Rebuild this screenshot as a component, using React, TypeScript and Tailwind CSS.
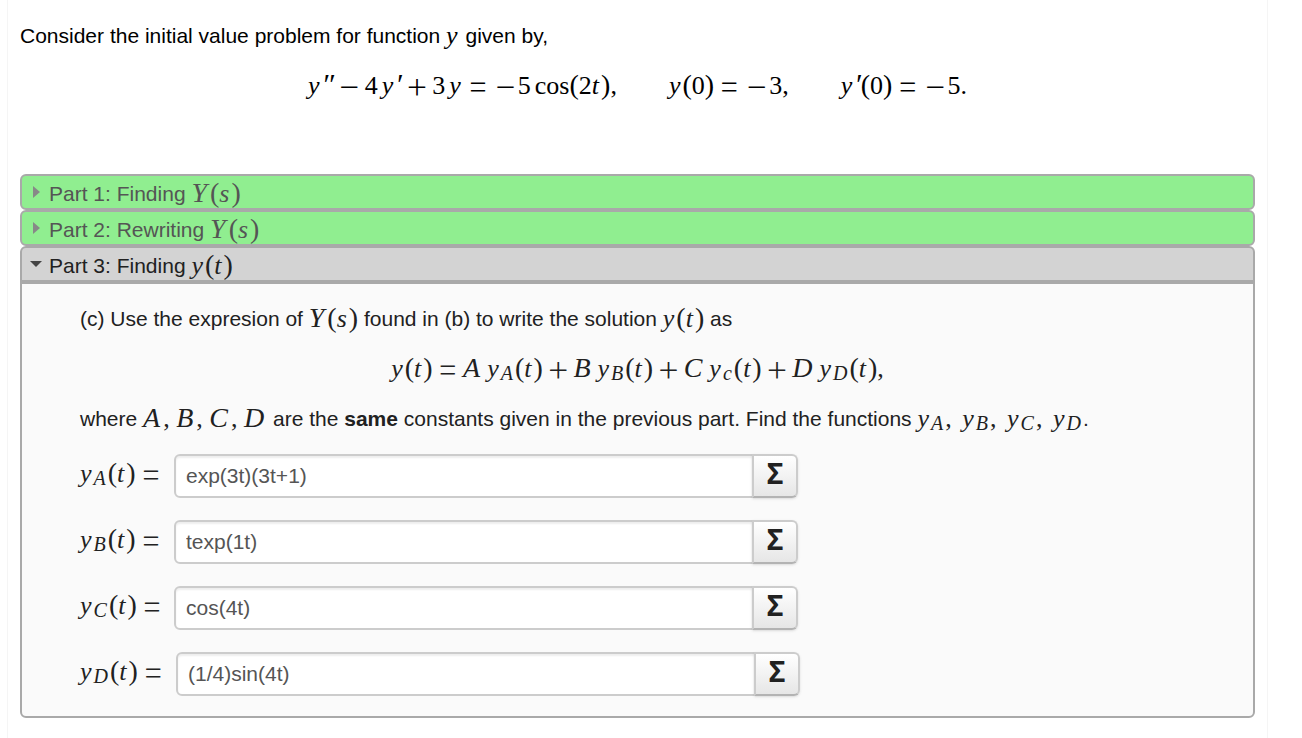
import clsx from 'clsx';
import { ReactNode, useState } from 'react';

type Children = { children: ReactNode };

const MathText = ({ children }: Children) => (
  <span className="align-[-1px] font-['Liberation_Serif',serif] text-[26px] leading-none whitespace-nowrap">
    {children}
  </span>
);

const Var = ({ children }: Children) => <i className="mr-0.5">{children}</i>;

const Cap = ({ children }: Children) => (
  <i className="mr-[3px] text-[28px] leading-[0]">{children}</i>
);

const Sub = ({ children }: Children) => (
  <i className="mr-0.5 align-[-3px] text-[20px] leading-[0]">{children}</i>
);

const Prime = ({ children }: Children) => (
  <i className="text-[30px] leading-[0]">{children}</i>
);

const Paren = ({ children }: Children) => (
  <>
    <span className="text-[28px] leading-[0]">(</span>
    {children}
    <span className="text-[28px] leading-[0]">)</span>
  </>
);

// binary operators and relations
const Op = ({ children }: Children) => (
  <span className="mx-[3px] align-[-4px] font-['Inter',sans-serif] text-[38px] leading-[0] font-extralight">
    {children}
  </span>
);

const Minus = () => (
  <span className="align-[-4px] font-['Inter',sans-serif] text-[38px] leading-[0] font-extralight">
    −
  </span>
);

const Quad = () => <span className="inline-block w-[52px]" />;

const Thin = () => <span className="inline-block w-1" />;

const OfT = () => (
  <Paren>
    <Var>t</Var>
  </Paren>
);

const Laplace = () => (
  <MathText>
    <Cap>Y</Cap>
    <Paren>
      <Var>s</Var>
    </Paren>
  </MathText>
);

const Solution = () => (
  <MathText>
    <Var>y</Var>
    <OfT />
  </MathText>
);

const Arrow = ({ open }: { open: boolean }) => (
  <svg
    viewBox="0 0 12 12"
    className={clsx('h-3 w-3 shrink-0', open ? 'fill-[#444]' : 'fill-[#888]')}
  >
    <path d={open ? 'M0 3h12L6 9z' : 'M3 0v12l7-6z'} />
  </svg>
);

type PartProps = {
  id: string;
  title: ReactNode;
  defaultOpen?: boolean;
  children?: ReactNode;
};

const Part = ({ id, title, defaultOpen = false, children }: PartProps) => {
  const [open, setOpen] = useState(defaultOpen);
  return (
    <section>
      <h2>
        <button
          type="button"
          aria-expanded={open}
          aria-controls={id}
          onClick={() => setOpen(!open)}
          className={clsx(
            'flex h-9 w-full items-center gap-[7px] border-2 border-[#a9a9a9] px-2 text-left',
            open
              ? 'rounded-t-md bg-[#d3d3d3] text-[#212121]'
              : 'rounded-md bg-[#90ee90] text-[#555]',
          )}
        >
          <Arrow open={open} />
          <span className="pt-1 leading-8">{title}</span>
        </button>
      </h2>
      {open && (
        <div
          id={id}
          className="rounded-b-md border-2 border-[#a9a9a9] bg-[#fafafa] px-[58px] py-5 text-[#212121]"
        >
          {children}
        </div>
      )}
    </section>
  );
};

const answers = [
  { name: 'A', value: 'exp(3t)(3t+1)' },
  { name: 'B', value: 'texp(1t)' },
  { name: 'C', value: 'cos(4t)' },
  { name: 'D', value: '(1/4)sin(4t)' },
];

const AnswerRow = ({ name, value }: { name: string; value: string }) => {
  const id = `answer-${name}`;
  return (
    <div className="flex h-11 items-center">
      <label
        htmlFor={id}
        className={clsx('shrink-0 pb-1', name === 'D' ? 'w-24' : 'w-[94px]')}
      >
        <MathText>
          <Var>y</Var>
          <Sub>{name}</Sub>
          <OfT />
          <Op>=</Op>
        </MathText>
      </label>
      <input
        id={id}
        type="text"
        defaultValue={value}
        className="h-11 w-[580px] min-w-0 rounded-l-md border-2 border-[#ccc] bg-white px-[10px] text-[#555] shadow-[inset_0_2px_2px_rgba(0,0,0,0.07)]"
      />
      <button
        type="button"
        aria-label="Preview"
        className="-ml-0.5 flex h-11 w-[46px] shrink-0 items-center justify-center rounded-r-md border-2 border-[#ccc] border-b-[#b3b3b3] bg-linear-to-b from-white to-[#e6e6e6] pb-1.5 font-['Noto_Sans',sans-serif] text-[28px] leading-none font-bold shadow-sm"
      >
        Σ
      </button>
    </div>
  );
};

export default function App() {
  return (
    <main className="mr-[34px] ml-[7px] min-h-screen border-x border-[#f5f5f5] bg-white px-3 pt-[21px] pb-5 font-['Liberation_Sans',Arial,sans-serif] text-[21px] leading-[30px] text-black">
      <p>
        Consider the initial value problem for function{' '}
        <MathText>
          <Var>y</Var>
        </MathText>{' '}
        given by,
      </p>
      <p className="mt-5 text-center">
        <MathText>
          <Var>y</Var>
          <Prime>″</Prime>
          <Op>−</Op>4<Thin />
          <Var>y</Var>
          <Prime>′</Prime>
          <Op>+</Op>3<Thin />
          <Var>y</Var>
          <Op>=</Op>
          <Minus />5<Thin />
          cos<Paren>2<Var>t</Var></Paren>,
          <Quad />
          <Var>y</Var>
          <Paren>0</Paren>
          <Op>=</Op>
          <Minus />
          3,
          <Quad />
          <Var>y</Var>
          <Prime>′</Prime>
          <Paren>0</Paren>
          <Op>=</Op>
          <Minus />
          5.
        </MathText>
      </p>

      <div className="mt-[73px]">
        <Part id="part-1" title={<>Part 1: Finding <Laplace /></>} />
        <Part id="part-2" title={<>Part 2: Rewriting <Laplace /></>} />
        <Part
          id="part-3"
          title={<>Part 3: Finding <Solution /></>}
          defaultOpen
        >
          <p>
            (c) Use the expresion of <Laplace /> found in (b) to write the
            solution <Solution /> as
          </p>
          <p className="my-5 text-center">
            <MathText>
              <Var>y</Var>
              <OfT />
              <Op>=</Op>
              <Cap>A</Cap>
              <Thin />
              <Var>y</Var>
              <Sub>A</Sub>
              <OfT />
              <Op>+</Op>
              <Cap>B</Cap>
              <Thin />
              <Var>y</Var>
              <Sub>B</Sub>
              <OfT />
              <Op>+</Op>
              <Cap>C</Cap>
              <Thin />
              <Var>y</Var>
              <Sub>c</Sub>
              <OfT />
              <Op>+</Op>
              <Cap>D</Cap>
              <Thin />
              <Var>y</Var>
              <Sub>D</Sub>
              <OfT />,
            </MathText>
          </p>
          <p>
            where{' '}
            <MathText>
              <Cap>A</Cap>, <Cap>B</Cap>, <Cap>C</Cap>, <Cap>D</Cap>
            </MathText>{' '}
            are the <b>same</b> constants given in the previous part. Find the
            functions{' '}
            <MathText>
              {answers.map(({ name }, i) => (
                <span key={name}>
                  {i > 0 && (
                    <>
                      , <Thin />
                    </>
                  )}
                  <Var>y</Var>
                  <Sub>{name}</Sub>
                </span>
              ))}
            </MathText>
            .
          </p>
          <div className="mt-5 flex flex-col gap-[22px]">
            {answers.map((answer) => (
              <AnswerRow key={answer.name} {...answer} />
            ))}
          </div>
        </Part>
      </div>
    </main>
  );
}
